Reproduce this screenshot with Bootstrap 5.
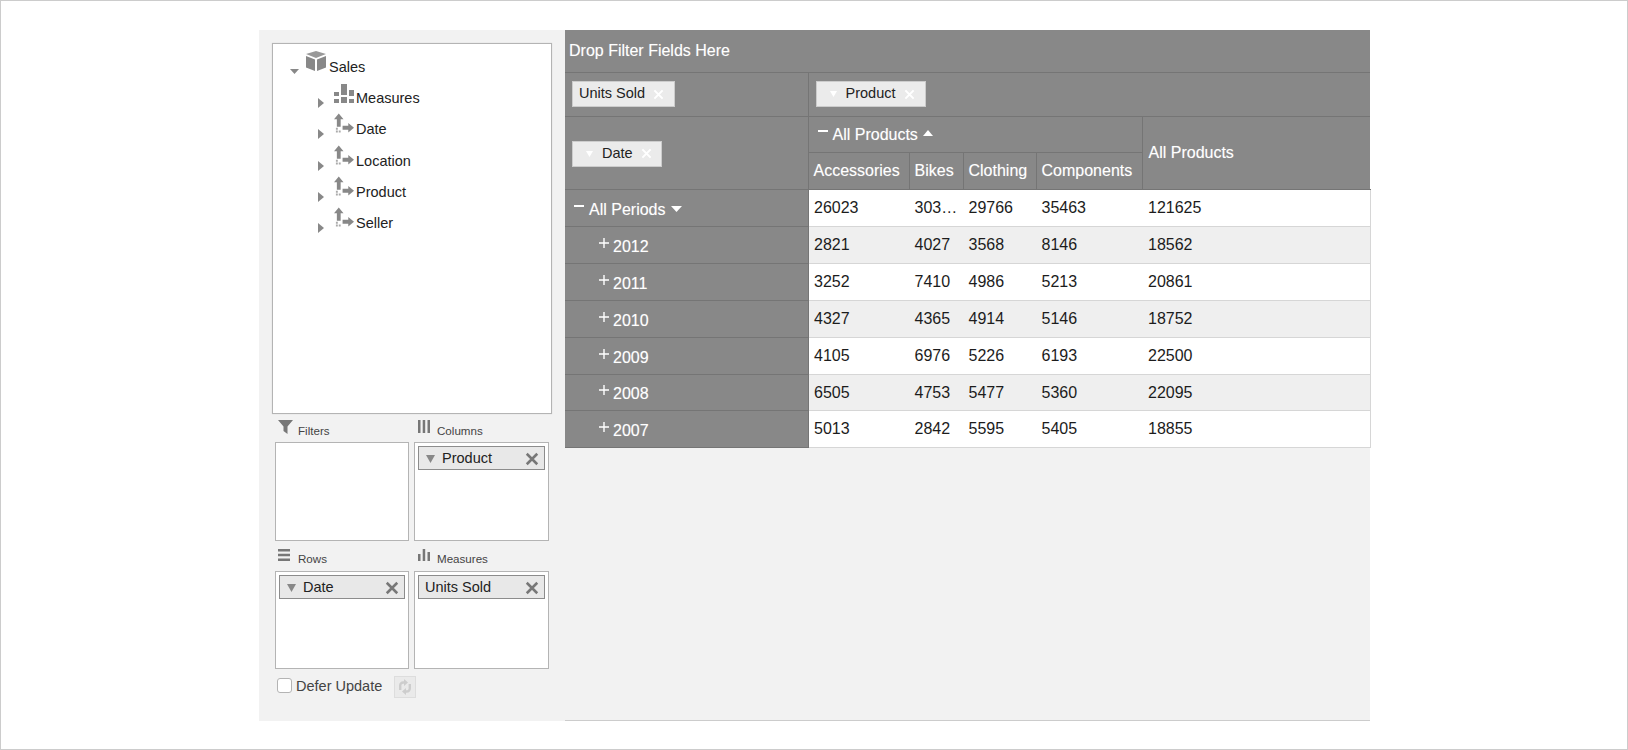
<!DOCTYPE html>
<html lang="en">
<head>
<meta charset="utf-8">
<title>Pivot</title>
<link href="https://cdn.jsdelivr.net/npm/bootstrap@5.3.0/dist/css/bootstrap.min.css" rel="stylesheet">
<style>
html,body{height:100%;overflow:hidden}
body{font-family:"Liberation Sans",Arial,sans-serif;background:#fff;border:1px solid #ccc;color:#222}
.pv-wrap{padding:29px 0 0 258px}
.pv-left{width:306px;height:691px;background:#f2f2f2;padding:13px 13px 0 13px;flex:none}
.pv-tree{width:280px;height:371px;background:#fff;border:1px solid #b4b4b4;box-shadow:0 0 1px #ccc;padding:8px 0 0 17px;font-size:14.5px;margin:0;list-style:none}
.pv-tree li{height:31.3px;white-space:nowrap}
.pv-tree li.pv-child{padding-left:28px}
.pv-tree .pv-tw{margin-right:10px;margin-top:8px;flex:none}
.pv-tree .pv-tw.pv-root{margin-right:7px}
.pv-tree .pv-ic{margin-right:2px;margin-bottom:14px;flex:none}
.pv-tree .pv-ic.pv-cube{margin-right:3px}
.pv-tree .pv-ic.pv-bars{margin-bottom:9px}
.pv-fields{padding-left:3px;width:275px;display:grid;grid-template-columns:134px 135px;column-gap:5px;grid-template-rows:28px 99px 30px 98px}
.pv-label{font-size:11.6px;color:#444;padding-left:3px;gap:5px}
.pv-label.pv-wide{gap:8px}
.pv-label.pv-rc{padding-left:4px;gap:7px}
.pv-label span{margin-top:6px}
.pv-label svg{margin-bottom:3px;flex:none}
.pv-drop{background:#fff;border:1px solid #b4b4b4;padding:3px}
.pv-chip{height:24px;background:#e8e8e8;border:1px solid #8c8c8c;font-size:14.5px;color:#222;padding:1px 5px 0 7px}
.pv-chip svg{color:#777;flex:none}
.pv-chip .pv-name{flex:1;padding-left:7px}
.pv-chip.pv-plain{padding-left:6px}
.pv-chip.pv-plain .pv-name{padding-left:0}
.pv-foot{padding:7px 0 0 5px;font-size:14.5px;color:#444}
.pv-check{width:15px;height:15px;margin:0 0 3px;border:1px solid #b4b4b4;border-radius:3px;background:#fff;appearance:none;flex:none}
.pv-refresh{width:22px;height:22px;background:#eaeaea;border:1px solid #ddd;margin-left:12px}
.pv-foot label{margin-left:4px}
.pv-right{width:805px;height:691px;background:#f2f2f2;border-bottom:1px solid #ccc;flex:none}
.pv-grid{table-layout:fixed;border-collapse:collapse;width:805px;font-size:16px}
.pv-head{background:#888;color:#fff;border:1px solid #757575;border-width:0 1px 1px 0;padding:0 5px;font-weight:400;white-space:nowrap;overflow:hidden;text-shadow:0 0 1px rgba(255,255,255,.35)}
.pv-head.pv-end{border-right:0}
.pv-head.pv-total{padding-left:6px}
.pv-head.pv-pad{padding:1px 0 0 4px}
.pv-head.pv-chipcell{padding-left:7px}
.pv-head.pv-chipcell.pv-low{padding-top:2px}
.pv-head.pv-row{padding:5px 0 0 9px}
.pv-head.pv-row.pv-top{padding:1px 0 0 9px}
.pv-head.pv-row.pv-sub{padding:4px 0 0 34px}
.pv-head .pv-mk{margin-right:5px;margin-bottom:9px}
.pv-head.pv-sub .pv-mk{margin-right:4px}
.pv-head .pv-tri{margin-left:1px;margin-bottom:4px}
.pv-cell{padding:1px 5px 0 5.500px;border-bottom:1px solid #d6d6d6;white-space:nowrap;overflow:hidden;text-overflow:ellipsis;color:#1c1c1c;background:#fff}
.pv-cell.pv-n{border-right:1px solid #d6d6d6;padding-left:6px}
.pv-alt .pv-cell{background:#efefef}
.pv-gchip{height:26px;background:#ebebeb;border:1px solid #ccc;font-size:14.5px;color:#222;text-shadow:none}
.pv-gchip svg{flex:none}
.pv-gchip .pv-name{margin:0 8px}
.pv-gchip.pv-u{width:103px;padding-left:6px}
.pv-gchip.pv-p{width:110px;padding-left:13px}
.pv-gchip.pv-d{width:90px;padding-left:13px}
.pv-gchip .pv-name.pv-first{margin-left:0;margin-right:8px}
.pv-gchip.pv-p .pv-name{margin:0 9px}
.pv-gchip.pv-d .pv-name{margin:0 8px 0 9px}
</style>
</head>
<body>
<svg width="0" height="0" class="d-block" aria-hidden="true">
  <defs>
    <symbol id="i-hier" viewBox="0 0 21 20"><path fill="#888" d="M5 0l5 6H7v8H3V6H0zM9 13h6v-3l6 5-6 5v-3H9z"/><path fill="#aaa" d="M2 15h2v2H2zM2 18h2v2H2zM5 18h2v2H5z"/></symbol>
    <symbol id="i-meas" viewBox="0 0 20 20"><path fill="#888" d="M0 8h5v4H0zM0 15h5v4H0zM7 0h6v11H7zM7 13h6v6H7zM15 6h5v6h-5zM15 15h5v4h-5z"/></symbol>
    <symbol id="i-x" viewBox="0 0 12 12"><path d="M1.500 1.500l9 9M10.500 1.500l-9 9" fill="none" stroke="currentColor" stroke-width="2.200"/></symbol>
    <symbol id="i-tw" viewBox="0 0 6 10"><path fill="#888" d="M0 0l6 5-6 5z"/></symbol>
    <symbol id="i-plus" viewBox="0 0 10 10"><path fill="#fff" d="M4.300 0h1.400v4.300H10v1.400H5.700V10H4.300V5.700H0V4.300h4.300z"/></symbol>
  </defs>
</svg>
<div class="pv-wrap d-flex">
  <div class="pv-left">
    <ul class="pv-tree">
      <li class="d-flex align-items-center"><svg class="pv-tw pv-root" width="9" height="5" viewBox="0 0 9 5"><path fill="#888" d="M0 0h9L4.500 5z"/></svg><svg class="pv-ic pv-cube" width="20" height="20" viewBox="0 0 20 20"><path fill="#999" d="M10 0l10 3-10 4L0 3z"/><path fill="#888" d="M0 5l9 3.500V20l-9-3.500zM20 5l-9 3.500V20l9-3.500z"/></svg><span>Sales</span></li>
      <li class="pv-child d-flex align-items-center"><svg class="pv-tw" width="6" height="10"><use href="#i-tw"/></svg><svg class="pv-ic pv-bars" width="20" height="20"><use href="#i-meas"/></svg><span>Measures</span></li>
      <li class="pv-child d-flex align-items-center"><svg class="pv-tw" width="6" height="10"><use href="#i-tw"/></svg><svg class="pv-ic" width="20" height="20"><use href="#i-hier"/></svg><span>Date</span></li>
      <li class="pv-child d-flex align-items-center"><svg class="pv-tw" width="6" height="10"><use href="#i-tw"/></svg><svg class="pv-ic" width="20" height="20"><use href="#i-hier"/></svg><span>Location</span></li>
      <li class="pv-child d-flex align-items-center"><svg class="pv-tw" width="6" height="10"><use href="#i-tw"/></svg><svg class="pv-ic" width="20" height="20"><use href="#i-hier"/></svg><span>Product</span></li>
      <li class="pv-child d-flex align-items-center"><svg class="pv-tw" width="6" height="10"><use href="#i-tw"/></svg><svg class="pv-ic" width="20" height="20"><use href="#i-hier"/></svg><span>Seller</span></li>
    </ul>
    <div class="pv-fields">
      <div class="pv-label d-flex align-items-center"><svg width="15" height="14" viewBox="0 0 15 14"><path fill="#777" d="M0 0h15L9.500 6.500V14L5.500 11V6.500z"/></svg><span>Filters</span></div>
      <div class="pv-label pv-rc d-flex align-items-center"><svg width="12" height="13" viewBox="0 0 12 13"><path fill="#777" d="M0 0h2.500v13H0zM4.700 0h2.500v13H4.700zM9.500 0H12v13H9.500z"/></svg><span>Columns</span></div>
      <div class="pv-drop"></div>
      <div class="pv-drop"><div class="pv-chip d-flex align-items-center"><svg width="9" height="8" viewBox="0 0 9 8"><path fill="#888" d="M0 0h9L4.500 8z"/></svg><span class="pv-name">Product</span><svg width="14" height="14"><use href="#i-x"/></svg></div></div>
      <div class="pv-label pv-wide d-flex align-items-center"><svg width="12" height="12" viewBox="0 0 12 12"><path fill="#777" d="M0 0h12v2.500H0zM0 4.700h12v2.500H0zM0 9.500h12V12H0z"/></svg><span>Rows</span></div>
      <div class="pv-label pv-rc d-flex align-items-center"><svg width="12" height="12" viewBox="0 0 12 12"><path fill="#777" d="M0 5h2.500v7H0zM4.700 0h2.500v12H4.700zM9.500 3H12v9H9.500z"/></svg><span>Measures</span></div>
      <div class="pv-drop"><div class="pv-chip d-flex align-items-center"><svg width="9" height="8" viewBox="0 0 9 8"><path fill="#888" d="M0 0h9L4.500 8z"/></svg><span class="pv-name">Date</span><svg width="14" height="14"><use href="#i-x"/></svg></div></div>
      <div class="pv-drop"><div class="pv-chip pv-plain d-flex align-items-center"><span class="pv-name">Units Sold</span><svg width="14" height="14"><use href="#i-x"/></svg></div></div>
    </div>
    <div class="pv-foot d-flex align-items-center"><input class="pv-check" type="checkbox" id="defer"><label for="defer">Defer Update</label>
      <div class="pv-refresh d-flex align-items-center justify-content-center"><svg width="16" height="16" viewBox="0 0 16 16"><path fill="none" stroke="#cdcdcd" stroke-width="2.400" d="M3.200 11V6.500A3 3 0 0 1 6.200 3.500H7.500M12.800 5v4.500a3 3 0 0 1-3 3H8.500"/><path fill="#cdcdcd" d="M7 0l4 3.500L7 7zM9 9l-4 3.500L9 16z"/></svg></div>
    </div>
  </div>
  <div class="pv-right">
    <table class="pv-grid">
      <colgroup><col style="width:243px"><col style="width:101px"><col style="width:54px"><col style="width:73px"><col style="width:106px"><col style="width:228px"></colgroup>
      <tbody>
      <tr style="height:42px"><td class="pv-head pv-pad pv-end" colspan="6">Drop Filter Fields Here</td></tr>
      <tr style="height:44px">
        <td class="pv-head pv-chipcell"><div class="pv-gchip pv-u d-flex align-items-center"><span class="pv-name pv-first">Units Sold</span><svg width="11" height="11" class="text-white"><use href="#i-x"/></svg></div></td>
        <td class="pv-head pv-chipcell pv-end" colspan="5"><div class="pv-gchip pv-p d-flex align-items-center"><svg width="7" height="6" viewBox="0 0 7 6"><path fill="#fff" d="M0 0h7L3.500 6z"/></svg><span class="pv-name">Product</span><svg width="11" height="11" class="text-white"><use href="#i-x"/></svg></div></td>
      </tr>
      <tr style="height:36px">
        <td class="pv-head pv-chipcell pv-low" rowspan="2"><div class="pv-gchip pv-d d-flex align-items-center"><svg width="7" height="6" viewBox="0 0 7 6"><path fill="#fff" d="M0 0h7L3.500 6z"/></svg><span class="pv-name">Date</span><svg width="11" height="11" class="text-white"><use href="#i-x"/></svg></div></td>
        <td class="pv-head pv-row pv-top" colspan="4"><svg class="pv-mk" width="10" height="2" viewBox="0 0 10 2"><path fill="#fff" d="M0 0h10v2H0z"/></svg>All Products <svg class="pv-tri" width="10" height="6" viewBox="0 0 10 6"><path fill="#fff" d="M5 0l5 6H0z"/></svg></td>
        <td class="pv-head pv-total pv-end" rowspan="2">All Products</td>
      </tr>
      <tr style="height:37px"><td class="pv-head">Accessories</td><td class="pv-head">Bikes</td><td class="pv-head">Clothing</td><td class="pv-head">Components</td></tr>
      <tr style="height:37px"><th class="pv-head pv-row"><svg class="pv-mk" width="10" height="2" viewBox="0 0 10 2"><path fill="#fff" d="M0 0h10v2H0z"/></svg>All Periods <svg class="pv-tri" width="11" height="6" viewBox="0 0 11 6"><path fill="#fff" d="M0 0h11L5.500 6z"/></svg></th><td class="pv-cell">26023</td><td class="pv-cell">30373</td><td class="pv-cell">29766</td><td class="pv-cell">35463</td><td class="pv-cell pv-n">121625</td></tr>
      <tr class="pv-alt" style="height:37px"><th class="pv-head pv-row pv-sub"><svg class="pv-mk" width="10" height="10"><use href="#i-plus"/></svg>2012</th><td class="pv-cell">2821</td><td class="pv-cell">4027</td><td class="pv-cell">3568</td><td class="pv-cell">8146</td><td class="pv-cell pv-n">18562</td></tr>
      <tr style="height:37px"><th class="pv-head pv-row pv-sub"><svg class="pv-mk" width="10" height="10"><use href="#i-plus"/></svg>2011</th><td class="pv-cell">3252</td><td class="pv-cell">7410</td><td class="pv-cell">4986</td><td class="pv-cell">5213</td><td class="pv-cell pv-n">20861</td></tr>
      <tr class="pv-alt" style="height:37px"><th class="pv-head pv-row pv-sub"><svg class="pv-mk" width="10" height="10"><use href="#i-plus"/></svg>2010</th><td class="pv-cell">4327</td><td class="pv-cell">4365</td><td class="pv-cell">4914</td><td class="pv-cell">5146</td><td class="pv-cell pv-n">18752</td></tr>
      <tr style="height:37px"><th class="pv-head pv-row pv-sub"><svg class="pv-mk" width="10" height="10"><use href="#i-plus"/></svg>2009</th><td class="pv-cell">4105</td><td class="pv-cell">6976</td><td class="pv-cell">5226</td><td class="pv-cell">6193</td><td class="pv-cell pv-n">22500</td></tr>
      <tr class="pv-alt" style="height:36px"><th class="pv-head pv-row pv-sub"><svg class="pv-mk" width="10" height="10"><use href="#i-plus"/></svg>2008</th><td class="pv-cell">6505</td><td class="pv-cell">4753</td><td class="pv-cell">5477</td><td class="pv-cell">5360</td><td class="pv-cell pv-n">22095</td></tr>
      <tr style="height:37px"><th class="pv-head pv-row pv-sub"><svg class="pv-mk" width="10" height="10"><use href="#i-plus"/></svg>2007</th><td class="pv-cell">5013</td><td class="pv-cell">2842</td><td class="pv-cell">5595</td><td class="pv-cell">5405</td><td class="pv-cell pv-n">18855</td></tr>
      </tbody>
    </table>
  </div>
</div>
<script src="https://cdn.jsdelivr.net/npm/bootstrap@5.3.0/dist/js/bootstrap.bundle.min.js"></script>
</body>
</html>
